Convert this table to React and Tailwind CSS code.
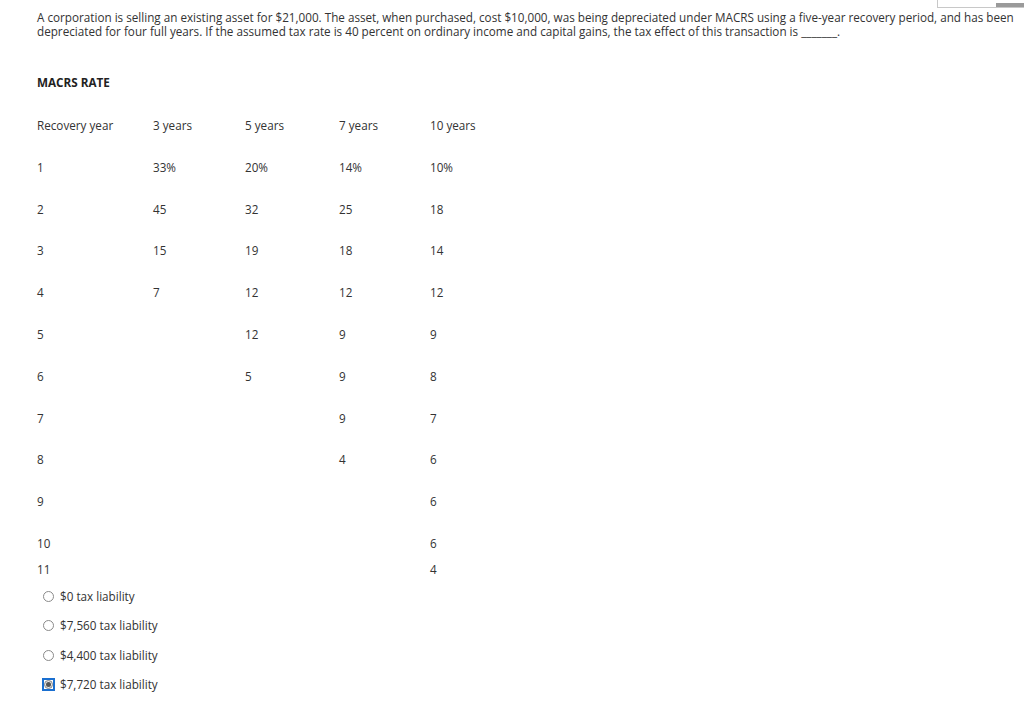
import React from "react";

const headers = ["Recovery year", "3 years", "5 years", "7 years", "10 years"];

const rows = [
  ["1", "33%", "20%", "14%", "10%"],
  ["2", "45", "32", "25", "18"],
  ["3", "15", "19", "18", "14"],
  ["4", "7", "12", "12", "12"],
  ["5", "", "12", "9", "9"],
  ["6", "", "5", "9", "8"],
  ["7", "", "", "9", "7"],
  ["8", "", "", "4", "6"],
  ["9", "", "", "", "6"],
  ["10", "", "", "", "6"],
  ["11", "", "", "", "4"],
];

const colWidths = ["w-[116px]", "w-[92px]", "w-[94px]", "w-[91px]", "w-[80px]"];

const options = [
  { label: "$0 tax liability", checked: false },
  { label: "$7,560 tax liability", checked: false },
  { label: "$4,400 tax liability", checked: false },
  { label: "$7,720 tax liability", checked: true },
];

function Radio({ checked }) {
  if (checked) {
    return (
      <span className="flex h-[13px] w-[13px] items-center justify-center border-2 border-[#1a6fd0]">
        <span className="flex h-[9px] w-[9px] items-center justify-center rounded-full border border-[#888] bg-[#e8e8e8]">
          <span className="h-[5px] w-[5px] rounded-full bg-[#555]" />
        </span>
      </span>
    );
  }
  return (
    <span className="flex h-[13px] w-[13px] items-center justify-center">
      <span className="h-[11px] w-[11px] rounded-full border border-[#8a8a8a] bg-white" />
    </span>
  );
}

function Row({ cells, height }) {
  return (
    <div className={`flex items-start ${height}`}>
      {cells.map((c, i) => (
        <div key={i} className={colWidths[i]}>
          {c}
        </div>
      ))}
    </div>
  );
}

export default function App() {
  return (
    <div className="min-h-[702px] bg-white text-[11.7px] leading-[14px] text-[#333] font-['Open_Sans',sans-serif]">
      {/* top-right clipped widget */}
      <div className="flex h-[8px] justify-end">
        <div className="flex w-[87px] items-end justify-end border-b border-l border-[#c8c8c8]">
          <div className="h-[4px] w-[28px] bg-[#9a9a9a]" />
        </div>
      </div>

      <div className="px-[37px] pt-[2px]">
        <p className="w-[985px]">
          A corporation is selling an existing asset for $21,000. The asset, when purchased, cost $10,000, was being
          depreciated under MACRS using a five-year recovery period, and has been depreciated for four full years. If
          the assumed tax rate is 40 percent on ordinary income and capital gains, the tax effect of this transaction is
          _______.
        </p>

        <p className="mt-[37px] font-bold text-[#222]">MACRS RATE</p>

        <div className="mt-[29px]">
          <Row cells={headers} height="h-[41.8px]" />
          {rows.map((r, i) => (
            <Row
              key={i}
              cells={r}
              height={i === 9 ? "h-[26px]" : i === 10 ? "h-[27px]" : "h-[41.8px]"}
            />
          ))}
        </div>

        <div className="flex flex-col pl-[5px]">
          {options.map((o, i) => (
            <label key={i} className="flex h-[29.5px] items-start gap-[5px]">
              <span className="pt-[1px]">
                <Radio checked={o.checked} />
              </span>
              <span>{o.label}</span>
            </label>
          ))}
        </div>
      </div>
    </div>
  );
}
